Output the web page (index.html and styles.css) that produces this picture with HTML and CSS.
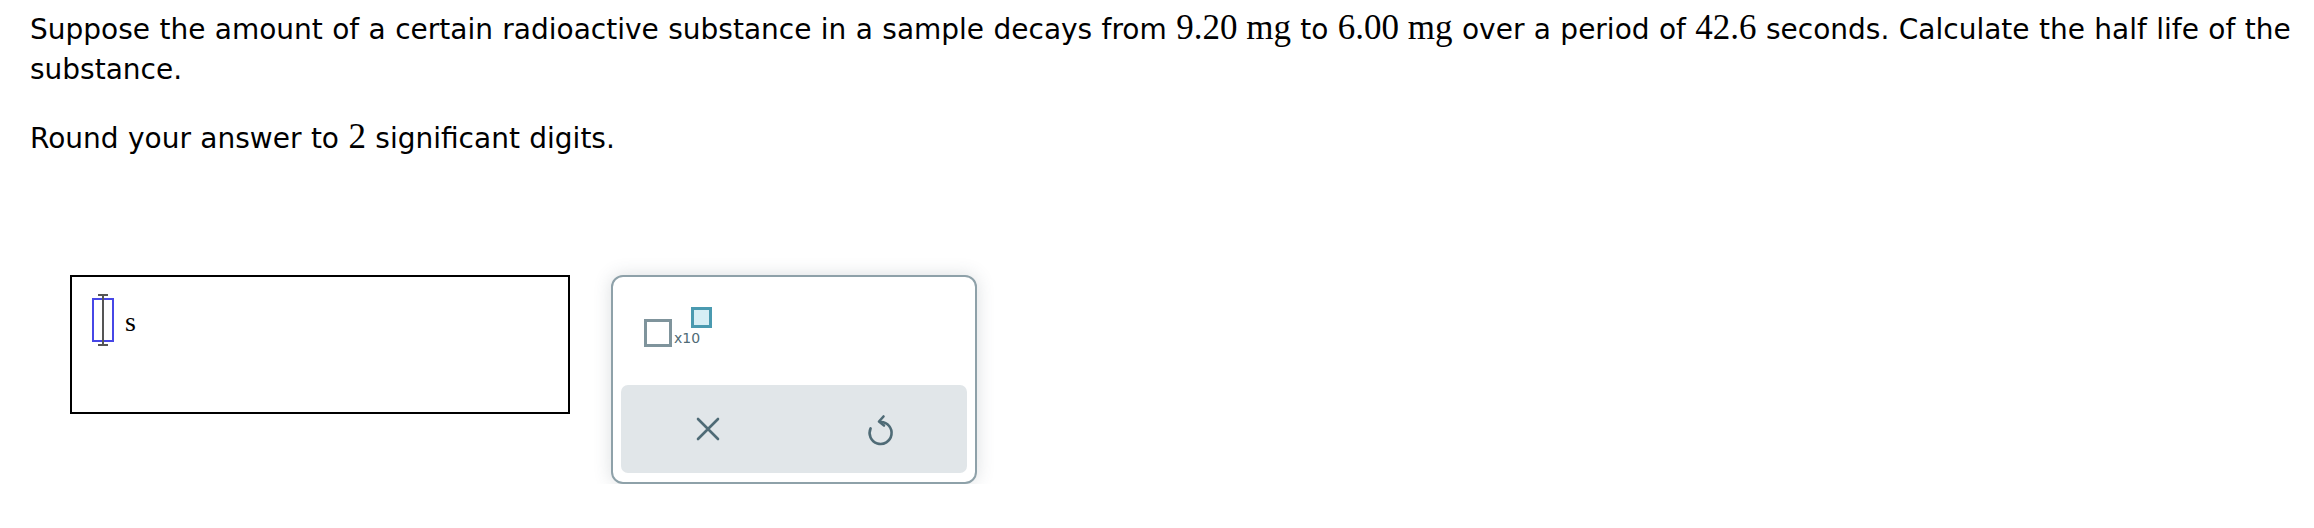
FILE: index.html
```html
<!DOCTYPE html>
<html>
<head>
<meta charset="utf-8">
<link rel="stylesheet" href="styles.css">
</head>
<body>
<div class="page">
  <p class="q">Suppose the amount of a certain radioactive substance in a sample decays from <span class="m">9.20 mg</span> to <span class="m">6.00 mg</span> over a period of <span class="m">42.6</span> seconds. Calculate the half life of the<br>substance.</p>
  <p class="q round">Round your answer to <span class="m">2</span> significant digits.</p>
  <div class="answer">
    <div class="input">
      <span class="cursor"><span class="beam"></span></span>
      <span class="unit">s</span>
    </div>
    <div class="panel">
      <div class="tools">
        <span class="sci">
          <span class="base"></span>
          <span class="x10">x10</span>
          <span class="exp"></span>
        </span>
      </div>
      <div class="actions">
        <button class="btn" aria-label="clear">
          <svg width="26" height="26" viewBox="0 0 26 26"><path d="M3 3 L23 23 M23 3 L3 23" stroke="#4f6b76" stroke-width="2.6" stroke-linecap="round" fill="none"/></svg>
        </button>
        <button class="btn" aria-label="undo">
          <svg width="30" height="36" viewBox="0 0 30 36"><path d="M15 11 A11 11 0 1 1 4.6 17.4" stroke="#4f6b76" stroke-width="2.6" stroke-linecap="round" fill="none"/><path d="M17.5 5.5 L13 10.5 L18 14.5" stroke="#4f6b76" stroke-width="2.6" stroke-linecap="round" stroke-linejoin="round" fill="none"/></svg>
        </button>
      </div>
    </div>
  </div>
</div>
</body>
</html>
```

FILE: styles.css
```css
html, body {
  margin: 0;
  padding: 0;
  background: #ffffff;
}
.page {
  padding: 10px 20px 0 30px;
  font-family: "DejaVu Sans", Verdana, sans-serif;
  font-size: 28px;
  color: #000000;
}
.q {
  margin: 0;
  line-height: 40px;
  word-spacing: 0.5px;
}
.m {
  font-family: "Liberation Serif", "Times New Roman", serif;
  font-size: 35px;
  line-height: 1;
  word-spacing: 0;
}
.round {
  margin-top: 29px;
}
.answer {
  display: flex;
  align-items: flex-start;
  gap: 41px;
  margin-top: 116px;
  margin-left: 40px;
}
.input {
  box-sizing: border-box;
  width: 500px;
  height: 139px;
  border: 2px solid #000000;
  display: flex;
  align-items: flex-start;
  padding: 19px 0 0 20px;
  gap: 11px;
}
.cursor {
  position: relative;
  box-sizing: border-box;
  width: 22px;
  height: 44px;
  border: 2px solid #4747e6;
  margin-top: 2px;
  display: flex;
  justify-content: center;
}
.beam {
  position: absolute;
  top: -6px;
  bottom: -6px;
  left: 8px;
  width: 2px;
  background: #555555;
}
.beam::before, .beam::after {
  content: "";
  position: absolute;
  left: -4px;
  width: 10px;
  height: 2px;
  background: #555555;
}
.beam::before { top: 0; }
.beam::after { bottom: 0; }
.unit {
  font-family: "Liberation Serif", "Times New Roman", serif;
  font-size: 28px;
  line-height: 1;
  margin-top: 12px;
}
.panel {
  box-sizing: border-box;
  width: 366px;
  height: 209px;
  border: 2px solid #8ea1a9;
  border-radius: 12px;
  background: #ffffff;
  box-shadow: 0 0 18px rgba(60, 80, 90, 0.18);
  padding: 0 8px 9px 8px;
  display: flex;
  flex-direction: column;
}
.tools {
  flex: 1;
  padding: 30px 0 0 23px;
}
.sci {
  position: relative;
  display: inline-flex;
  align-items: flex-end;
  padding-top: 12px;
}
.base {
  box-sizing: border-box;
  width: 28px;
  height: 28px;
  border: 3px solid #7f949c;
}
.x10 {
  font-family: "DejaVu Sans", Verdana, sans-serif;
  font-size: 14px;
  color: #4f6b76;
  line-height: 1;
  margin-left: 2px;
  margin-bottom: 2px;
}
.exp {
  box-sizing: border-box;
  width: 21px;
  height: 21px;
  border: 3px solid #4a9ab0;
  background: #d6eef5;
  margin-left: -9px;
  align-self: flex-start;
  margin-top: -12px;
}
.actions {
  height: 88px;
  background: #e1e6e9;
  border-radius: 7px;
  display: flex;
}
.btn {
  flex: 1;
  background: transparent;
  border: none;
  padding: 0;
  display: flex;
  align-items: center;
  justify-content: center;
  cursor: pointer;
}
```
